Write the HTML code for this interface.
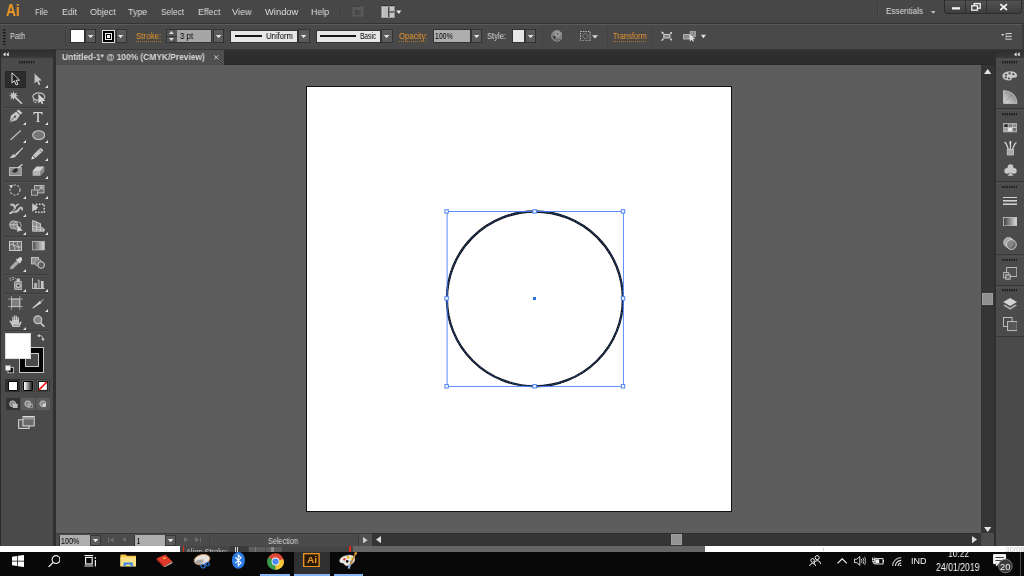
<!DOCTYPE html>
<html><head><meta charset="utf-8"><title>Untitled-1* @ 100% (CMYK/Preview)</title>
<style>
html,body{margin:0;padding:0;background:#474747;}
body{width:1024px;height:576px;position:relative;overflow:hidden;font-family:"Liberation Sans",sans-serif;}
#app{position:absolute;left:0;top:0;width:1024px;height:576px;overflow:hidden;background:#474747;}
#app div,#app svg,#app span.t{position:absolute;display:block;}
#app span.t{white-space:nowrap;transform-origin:0 0;will-change:transform;}
</style></head><body><div id="app">
<div style="left:0px;top:0px;width:1024px;height:23px;background:#474747;"></div>
<div style="left:0px;top:23px;width:1024px;height:1px;background:#333;"></div>
<div style="left:0px;top:24px;width:1022px;height:25px;background:#494949;border-top:1px solid #5a5a5a;box-sizing:border-box;"></div>
<div style="left:1022px;top:24px;width:2px;height:25px;background:#3a3a3a;"></div>
<div style="left:0px;top:49px;width:1024px;height:15.5px;background:linear-gradient(#383838 0,#2e2e2e 22%,#2d2d2d 90%,#272727 100%);"></div>
<div style="left:0px;top:49.5px;width:53px;height:8.5px;background:linear-gradient(#2e2e2e,#3a3a3a);"></div>
<div style="left:56px;top:49.5px;width:168px;height:15px;background:#4f4f4f;"></div>
<div style="left:996px;top:49.5px;width:28px;height:8.5px;background:linear-gradient(#2e2e2e,#3a3a3a);"></div>
<div style="left:56px;top:64.5px;width:925.5px;height:469px;background:#5d5d5d;"></div>
<div style="left:306px;top:86px;width:426px;height:426px;background:#111;"></div>
<div style="left:307px;top:87px;width:424px;height:424px;background:#fff;"></div>
<div style="left:0px;top:58px;width:53.3px;height:488px;background:#4a4a4a;"></div>
<div style="left:0px;top:49px;width:1px;height:497px;background:#2c2c2c;"></div>
<div style="left:53.2px;top:49px;width:2.6px;height:497px;background:#303030;"></div>
<div style="left:994px;top:49px;width:2px;height:497px;background:#2f2f2f;"></div>
<div style="left:996px;top:58px;width:28px;height:488px;background:#4a4a4a;"></div>
<div style="left:981.3px;top:64.5px;width:12.7px;height:469px;background:#353535;"></div>
<div style="left:982px;top:293px;width:11.2px;height:11.6px;background:#909090;border:1px solid #9c9c9c;box-sizing:border-box;"></div>
<div style="left:981.3px;top:533.3px;width:12.7px;height:12.5px;background:#4c4c4c;"></div>
<div style="left:56px;top:533.3px;width:316px;height:12.5px;background:#4b4b4b;border-top:1px solid #3a3a3a;box-sizing:border-box;"></div>
<div style="left:372px;top:533.3px;width:609.3px;height:12.5px;background:#353535;border-top:1px solid #2f2f2f;box-sizing:border-box;"></div>
<div style="left:670.9px;top:534.2px;width:11.2px;height:10.9px;background:#939393;border:1px solid #9e9e9e;box-sizing:border-box;"></div>
<div style="left:0px;top:545.8px;width:1024px;height:6.2px;background:#666;"></div>
<div style="left:0px;top:545.8px;width:180px;height:6.2px;background:#fff;"></div>
<div style="left:180px;top:545.8px;width:169px;height:6.2px;background:#454545;"></div>
<div style="left:182.8px;top:545.8px;width:1.7px;height:6.2px;background:#e0281e;"></div>
<div style="left:349.1px;top:545.8px;width:1.9px;height:6.2px;background:#e0281e;"></div>
<div style="left:351px;top:545.8px;width:2.4px;height:6.2px;background:#454545;"></div>
<div style="left:704.8px;top:545.8px;width:319.2px;height:6.2px;background:#fff;"></div>
<div style="left:0px;top:552px;width:1024px;height:24px;background:#080808;"></div>
<div style="left:294px;top:552px;width:36px;height:24px;background:#303030;"></div>
<svg style="left:0px;top:0px;" width="1024" height="576" viewBox="0 0 1024 576" preserveAspectRatio="none"><ellipse cx="534.9" cy="298.9" rx="88.0" ry="87.4" fill="none" stroke="#0c0c0c" stroke-width="2.3"/><ellipse cx="534.9" cy="298.9" rx="88.0" ry="87.4" fill="none" stroke="#2f6fe6" stroke-width="0.8" stroke-dasharray="2.2 1.1" opacity="0.9"/><rect x="447.1" y="211.5" width="176.29999999999995" height="174.89999999999998" fill="none" stroke="#4d80fb" stroke-width="0.9"/><rect x="444.90000000000003" y="209.70000000000002" width="3.4" height="3.4" fill="#fff" stroke="#4a80f5" stroke-width="1"/><rect x="444.90000000000003" y="296.7" width="3.4" height="3.4" fill="#fff" stroke="#4a80f5" stroke-width="1"/><rect x="444.90000000000003" y="384.6" width="3.4" height="3.4" fill="#fff" stroke="#4a80f5" stroke-width="1"/><rect x="532.9" y="209.70000000000002" width="3.4" height="3.4" fill="#fff" stroke="#4a80f5" stroke-width="1"/><rect x="532.9" y="384.6" width="3.4" height="3.4" fill="#fff" stroke="#4a80f5" stroke-width="1"/><rect x="621.3" y="209.70000000000002" width="3.4" height="3.4" fill="#fff" stroke="#4a80f5" stroke-width="1"/><rect x="621.3" y="296.7" width="3.4" height="3.4" fill="#fff" stroke="#4a80f5" stroke-width="1"/><rect x="621.3" y="384.6" width="3.4" height="3.4" fill="#fff" stroke="#4a80f5" stroke-width="1"/><rect x="533" y="297" width="3" height="3" fill="#2a72e0"/></svg>
<span class="t" style="left:6.30px;top:1.61px;font-size:17px;line-height:17px;color:#f29a24;font-weight:bold;transform:scaleX(0.8059);">Ai</span>
<span class="t" style="left:35.30px;top:7.14px;font-size:9.4px;line-height:9.4px;color:#dedede;transform:scaleX(0.8384);">File</span>
<span class="t" style="left:61.50px;top:7.14px;font-size:9.4px;line-height:9.4px;color:#dedede;transform:scaleX(0.9322);">Edit</span>
<span class="t" style="left:89.80px;top:7.14px;font-size:9.4px;line-height:9.4px;color:#dedede;transform:scaleX(0.9497);">Object</span>
<span class="t" style="left:128.20px;top:7.14px;font-size:9.4px;line-height:9.4px;color:#dedede;transform:scaleX(0.9470);">Type</span>
<span class="t" style="left:160.80px;top:7.14px;font-size:9.4px;line-height:9.4px;color:#dedede;transform:scaleX(0.8880);">Select</span>
<span class="t" style="left:197.60px;top:7.14px;font-size:9.4px;line-height:9.4px;color:#dedede;transform:scaleX(0.9387);">Effect</span>
<span class="t" style="left:231.80px;top:7.14px;font-size:9.4px;line-height:9.4px;color:#dedede;transform:scaleX(0.9651);">View</span>
<span class="t" style="left:264.60px;top:7.14px;font-size:9.4px;line-height:9.4px;color:#dedede;transform:scaleX(0.9930);">Window</span>
<span class="t" style="left:310.60px;top:7.14px;font-size:9.4px;line-height:9.4px;color:#dedede;transform:scaleX(0.9414);">Help</span>
<div style="left:339.6px;top:4px;width:1px;height:15px;background:#404040;"></div>
<div style="left:340.6px;top:4px;width:1px;height:15px;background:#4c4c4c;"></div>
<svg style="left:352px;top:6px;" width="12" height="11" viewBox="0 0 12 11" preserveAspectRatio="none"><rect x="0.5" y="0.5" width="11" height="10" fill="#575757" stroke="#515151"/><rect x="0.5" y="0" width="7" height="1" fill="#3f3f3f"/></svg>
<span class="t" style="left:355.00px;top:9.64px;font-size:6.8px;line-height:6.8px;color:#3c3c3c;font-weight:bold;transform:scaleX(0.7675);">Br</span>
<svg style="left:380.5px;top:4.6px;" width="21.5" height="13.4" viewBox="0 0 21.5 13.4" preserveAspectRatio="none"><rect x="0.6" y="0" width="13" height="1" fill="#1c1c1c"/><rect x="0.6" y="1.2" width="13" height="11.6" fill="#d2d2d2" stroke="#8a8a8a" stroke-width="0.8"/><rect x="1.8" y="2.4" width="5.2" height="9.2" fill="#bcbcbc"/><rect x="8.6" y="2.4" width="4.2" height="4" fill="#c4c4c4"/><rect x="8.6" y="7.6" width="4.2" height="4" fill="#c4c4c4"/><rect x="7.2" y="2" width="1.2" height="10" fill="#262626"/><rect x="8.4" y="6.4" width="4.8" height="1.1" fill="#262626"/><path d="M15.2 5.6 L20.4 5.6 L17.8 9 Z" fill="#e6e6e6"/></svg>
<div style="left:876.5px;top:4px;width:1px;height:15px;background:#3c3c3c;"></div>
<div style="left:877.5px;top:4px;width:1px;height:15px;background:#4e4e4e;"></div>
<span class="t" style="left:886.40px;top:6.24px;font-size:9.4px;line-height:9.4px;color:#dedede;transform:scaleX(0.8683);">Essentials</span>
<svg style="left:930.8px;top:10.8px;" width="4.6" height="2.8" viewBox="0 0 4.6 2.8" preserveAspectRatio="none"><path d="M0 0 L4.6 0 L2.3 2.8 Z" fill="#c0c0c0"/></svg>
<svg style="left:944px;top:0px;" width="78" height="14.5" viewBox="0 0 78 14.5" preserveAspectRatio="none"><defs><linearGradient id="wb" x1="0" y1="0" x2="0" y2="1"><stop offset="0" stop-color="#535353"/><stop offset="1" stop-color="#3d3d3d"/></linearGradient></defs><path d="M0.5 0 V11 Q0.5 13.5 3 13.5 H75 Q77.5 13.5 77.5 11 V0 Z" fill="url(#wb)" stroke="#2b2b2b"/><path d="M21.5 0 V13 M42.5 0 V13" stroke="#2e2e2e"/><rect x="8" y="7.2" width="8" height="2.3" fill="#f2f2f2"/><rect x="30.2" y="3.6" width="6" height="4.6" fill="none" stroke="#f2f2f2" stroke-width="1.3"/><rect x="27.8" y="5.8" width="5.6" height="4.4" fill="#454545" stroke="#f2f2f2" stroke-width="1.3"/><path d="M56.3 4.2 L63 10 M63 4.2 L56.3 10" stroke="#f2f2f2" stroke-width="1.7"/></svg>
<svg style="left:3.4px;top:29px;" width="3" height="16" viewBox="0 0 3 16" preserveAspectRatio="none"><rect x="0" y="0.2" width="2.6" height="1.3" fill="#1a1a1a"/><rect x="0" y="3.1" width="2.6" height="1.3" fill="#1a1a1a"/><rect x="0" y="6.0" width="2.6" height="1.3" fill="#1a1a1a"/><rect x="0" y="8.899999999999999" width="2.6" height="1.3" fill="#1a1a1a"/><rect x="0" y="11.799999999999999" width="2.6" height="1.3" fill="#1a1a1a"/><rect x="0" y="14.7" width="2.6" height="1.3" fill="#1a1a1a"/></svg>
<span class="t" style="left:9.80px;top:32.32px;font-size:8.6px;line-height:8.6px;color:#d8d8d8;transform:scaleX(0.8592);">Path</span>
<div style="left:64.5px;top:27px;width:1px;height:20px;background:#414141;"></div>
<div style="left:70.3px;top:29.3px;width:14.6px;height:14.2px;background:#fff;border:1px solid #2e2e2e;box-sizing:border-box;"></div>
<div style="left:84.6px;top:29.3px;width:11px;height:14.2px;background:#5b5b5b;border:1px solid #333;box-sizing:border-box;"></div>
<svg style="left:87.5px;top:35.0px;" width="5.2" height="3.2" viewBox="0 0 5.2 3.2" preserveAspectRatio="none"><path d="M0 0 L5.2 0 L2.6 3.2 Z" fill="#e4e4e4"/></svg>
<div style="left:101.6px;top:29.6px;width:13.6px;height:13.6px;background:#000;border:1px solid #ddd;box-sizing:border-box;"></div>
<div style="left:104.6px;top:32.6px;width:7.6px;height:7.6px;background:#000;border:1px solid #eee;box-sizing:border-box;"></div>
<div style="left:106.6px;top:34.6px;width:3.6px;height:3.6px;background:#f4f4f4;"></div>
<div style="left:115.5px;top:29.3px;width:11px;height:14.2px;background:#5b5b5b;border:1px solid #333;box-sizing:border-box;"></div>
<svg style="left:118.4px;top:35.0px;" width="5.2" height="3.2" viewBox="0 0 5.2 3.2" preserveAspectRatio="none"><path d="M0 0 L5.2 0 L2.6 3.2 Z" fill="#e4e4e4"/></svg>
<span class="t" style="left:135.80px;top:32.25px;font-size:8.8px;line-height:8.8px;color:#e8952a;transform:scaleX(0.9039);">Stroke:</span>
<div style="left:135.8px;top:40.5px;width:25.4px;height:1px;background:repeating-linear-gradient(90deg,#b87422 0 1px,transparent 1px 2px);"></div>
<div style="left:166px;top:29.3px;width:11.6px;height:14.2px;background:#555;border:1px solid #333;box-sizing:border-box;"></div>
<div style="left:167px;top:36px;width:9.6px;height:1px;background:#3a3a3a;"></div>
<svg style="left:169.4px;top:31.4px;" width="4.8" height="3" viewBox="0 0 4.8 3" preserveAspectRatio="none"><path d="M0 3 L4.8 3 L2.4 0 Z" fill="#dcdcdc"/></svg>
<svg style="left:169.4px;top:38.4px;" width="4.8" height="3" viewBox="0 0 4.8 3" preserveAspectRatio="none"><path d="M0 0 L4.8 0 L2.4 3 Z" fill="#dcdcdc"/></svg>
<div style="left:177.4px;top:29.3px;width:35px;height:14.2px;background:#a6a6a6;border:1px solid #333;border-left:none;box-sizing:border-box;"></div>
<span class="t" style="left:180.00px;top:31.75px;font-size:8.8px;line-height:8.8px;color:#000;transform:scaleX(0.8857);">3 pt</span>
<div style="left:212.6px;top:29.3px;width:11.2px;height:14.2px;background:#5b5b5b;border:1px solid #333;box-sizing:border-box;"></div>
<svg style="left:215.6px;top:35.0px;" width="5.2" height="3.2" viewBox="0 0 5.2 3.2" preserveAspectRatio="none"><path d="M0 0 L5.2 0 L2.6 3.2 Z" fill="#e4e4e4"/></svg>
<div style="left:229.6px;top:29.6px;width:68.2px;height:13.6px;background:#e6e6e6;border:1px solid #333;box-sizing:border-box;"></div>
<div style="left:234.6px;top:35.2px;width:27.6px;height:1.8px;background:#161616;"></div>
<span class="t" style="left:265.90px;top:31.75px;font-size:8.8px;line-height:8.8px;color:#000;transform:scaleX(0.8732);">Uniform</span>
<div style="left:297.6px;top:29.3px;width:12.2px;height:14.2px;background:#5b5b5b;border:1px solid #333;box-sizing:border-box;"></div>
<svg style="left:301.1px;top:35.0px;" width="5.2" height="3.2" viewBox="0 0 5.2 3.2" preserveAspectRatio="none"><path d="M0 0 L5.2 0 L2.6 3.2 Z" fill="#e4e4e4"/></svg>
<div style="left:315.6px;top:29.6px;width:65.2px;height:13.6px;background:#e6e6e6;border:1px solid #333;box-sizing:border-box;"></div>
<div style="left:320px;top:35.2px;width:36px;height:1.8px;background:#161616;"></div>
<span class="t" style="left:359.80px;top:31.75px;font-size:8.8px;line-height:8.8px;color:#000;transform:scaleX(0.7482);">Basic</span>
<div style="left:380.6px;top:29.3px;width:12.2px;height:14.2px;background:#5b5b5b;border:1px solid #333;box-sizing:border-box;"></div>
<svg style="left:384.1px;top:35.0px;" width="5.2" height="3.2" viewBox="0 0 5.2 3.2" preserveAspectRatio="none"><path d="M0 0 L5.2 0 L2.6 3.2 Z" fill="#e4e4e4"/></svg>
<span class="t" style="left:398.50px;top:32.25px;font-size:8.8px;line-height:8.8px;color:#e8952a;transform:scaleX(0.8830);">Opacity:</span>
<div style="left:398.5px;top:40.5px;width:28.6px;height:1px;background:repeating-linear-gradient(90deg,#b87422 0 1px,transparent 1px 2px);"></div>
<div style="left:432.5px;top:29.3px;width:38.8px;height:14.2px;background:#adadad;border:1px solid #333;box-sizing:border-box;"></div>
<span class="t" style="left:435.00px;top:31.75px;font-size:8.8px;line-height:8.8px;color:#000;transform:scaleX(0.7909);">100%</span>
<div style="left:471px;top:29.3px;width:11.4px;height:14.2px;background:#5b5b5b;border:1px solid #333;box-sizing:border-box;"></div>
<svg style="left:474.09999999999997px;top:35.0px;" width="5.2" height="3.2" viewBox="0 0 5.2 3.2" preserveAspectRatio="none"><path d="M0 0 L5.2 0 L2.6 3.2 Z" fill="#e4e4e4"/></svg>
<span class="t" style="left:486.90px;top:31.75px;font-size:8.8px;line-height:8.8px;color:#d8d8d8;transform:scaleX(0.8678);">Style:</span>
<div style="left:511.6px;top:29.3px;width:13.4px;height:14.2px;background:#e8e8e8;border:1px solid #333;box-sizing:border-box;"></div>
<div style="left:524.8px;top:29.3px;width:11.6px;height:14.2px;background:#5b5b5b;border:1px solid #333;box-sizing:border-box;"></div>
<svg style="left:527.9999999999999px;top:35.0px;" width="5.2" height="3.2" viewBox="0 0 5.2 3.2" preserveAspectRatio="none"><path d="M0 0 L5.2 0 L2.6 3.2 Z" fill="#e4e4e4"/></svg>
<div style="left:541.6px;top:27px;width:1px;height:20px;background:#414141;"></div>
<div style="left:606.6px;top:27px;width:1px;height:20px;background:#414141;"></div>
<div style="left:652.2px;top:27px;width:1px;height:20px;background:#414141;"></div>
<svg style="left:550.6px;top:29.8px;" width="11.8" height="11.8" viewBox="0 0 11.8 11.8" preserveAspectRatio="none"><defs><radialGradient id="gl" cx="0.55" cy="0.35" r="0.75"><stop offset="0" stop-color="#b4b4b4"/><stop offset="0.55" stop-color="#7c7c7c"/><stop offset="1" stop-color="#3e3e3e"/></radialGradient></defs><circle cx="5.9" cy="5.9" r="5.3" fill="url(#gl)" stroke="#a6a6a6" stroke-width="0.8"/><path d="M2.2 6.6 Q3.4 5.4 4.6 6.4 Q5 8 3.6 8.6 Q2.2 8.4 2.2 6.6 Z" fill="#1e1e1e" opacity="0.85"/><path d="M5.6 3.4 Q7 2.6 7.6 4 Q7 5.6 5.8 5 Z" fill="#444" opacity="0.8"/></svg>
<svg style="left:579.8px;top:30.6px;" width="18.4" height="10.6" viewBox="0 0 18.4 10.6" preserveAspectRatio="none"><rect x="0.5" y="0.5" width="9.6" height="9.4" fill="none" stroke="#d6d6d6" stroke-width="0.8" stroke-dasharray="1.5 1"/><circle cx="5.3" cy="5.2" r="2.5" fill="none" stroke="#b4b4b4" stroke-width="0.8" stroke-dasharray="1.2 0.9"/><path d="M12 4.2 L18 4.2 L15 7.4 Z" fill="#dadada"/></svg>
<span class="t" style="left:613.20px;top:32.25px;font-size:8.8px;line-height:8.8px;color:#e8952a;transform:scaleX(0.8499);">Transform</span>
<div style="left:613.2px;top:40.5px;width:34px;height:1px;background:repeating-linear-gradient(90deg,#b87422 0 1px,transparent 1px 2px);"></div>
<svg style="left:660.6px;top:31px;" width="11.8" height="10.4" viewBox="0 0 11.8 10.4" preserveAspectRatio="none"><rect x="2.8" y="3.4" width="6.2" height="3.6" fill="#858585" stroke="#d8d8d8" stroke-width="0.9"/><path d="M0.2 0.6 L3 1.4 L1.2 3.2 Z M11.6 0.6 L8.8 1.4 L10.6 3.2 Z M0.2 9.8 L3 9 L1.2 7.2 Z M11.6 9.8 L8.8 9 L10.6 7.2 Z" fill="#d8d8d8"/><path d="M0.6 0.8 L2.6 2.8 M11.2 0.8 L9.2 2.8 M0.6 9.6 L2.6 7.6 M11.2 9.6 L9.2 7.6" stroke="#cfcfcf" stroke-width="0.8"/></svg>
<svg style="left:683px;top:30.6px;" width="24" height="11" viewBox="0 0 24 11" preserveAspectRatio="none"><rect x="0.6" y="3.4" width="6" height="4.6" fill="#8a8a8a" stroke="#c4c4c4" stroke-width="0.8"/><rect x="7.2" y="0.5" width="5.4" height="5.2" fill="#8e8e8e" stroke="#b4b4b4" stroke-width="0.7"/><path d="M6.8 3.2 L6.8 10.6 L8.6 8.8 L10 10.8 L11 10.2 L9.8 8.2 L12.2 8 Z" fill="#dedede"/><path d="M17.8 3.8 L23 3.8 L20.4 7.2 Z" fill="#e4e4e4"/></svg>
<svg style="left:1000.5px;top:32.6px;" width="11" height="7" viewBox="0 0 11 7" preserveAspectRatio="none"><path d="M0 1 L3.4 1 L1.7 3.2 Z" fill="#cfcfcf"/><rect x="4.6" y="0" width="6.2" height="1.1" fill="#cfcfcf"/><rect x="4.6" y="2.8" width="6.2" height="1.1" fill="#cfcfcf"/><rect x="4.6" y="5.6" width="6.2" height="1.1" fill="#cfcfcf"/><rect x="4.6" y="0" width="1.2" height="6.7" fill="#9a9a9a"/></svg>
<span class="t" style="left:62.30px;top:52.61px;font-size:9.2px;line-height:9.2px;color:#d6d6d6;font-weight:bold;transform:scaleX(0.9118);">Untitled-1* @ 100% (CMYK/Preview)</span>
<svg style="left:214.4px;top:55.2px;" width="4.6" height="4.6" viewBox="0 0 4.6 4.6" preserveAspectRatio="none"><path d="M0.3 0.3 L4.3 4.3 M4.3 0.3 L0.3 4.3" stroke="#cfcfcf" stroke-width="1"/></svg>
<svg style="left:3.4px;top:51.6px;" width="6" height="4.8" viewBox="0 0 6 4.8" preserveAspectRatio="none"><path d="M2.6 0 V4.8 L0 2.4 Z M5.8 0 V4.8 L3.2 2.4 Z" fill="#dadada"/></svg>
<svg style="left:1014.4px;top:51.6px;" width="6" height="4.8" viewBox="0 0 6 4.8" preserveAspectRatio="none"><path d="M2.6 0 V4.8 L0 2.4 Z M5.8 0 V4.8 L3.2 2.4 Z" fill="#dadada"/></svg>
<svg style="left:19.2px;top:61.2px;" width="15.6" height="2.4" viewBox="0 0 15.6 2.4" preserveAspectRatio="none"><rect x="0.0" y="0" width="1.4" height="2.4" fill="#1e1e1e"/><rect x="2.32" y="0" width="1.4" height="2.4" fill="#1e1e1e"/><rect x="4.64" y="0" width="1.4" height="2.4" fill="#1e1e1e"/><rect x="6.959999999999999" y="0" width="1.4" height="2.4" fill="#1e1e1e"/><rect x="9.28" y="0" width="1.4" height="2.4" fill="#1e1e1e"/><rect x="11.6" y="0" width="1.4" height="2.4" fill="#1e1e1e"/><rect x="13.919999999999998" y="0" width="1.4" height="2.4" fill="#1e1e1e"/></svg>
<div style="left:4px;top:106.6px;width:45px;height:1px;background:#3d3d3d;"></div>
<div style="left:4px;top:107.6px;width:45px;height:0.6px;background:#525252;"></div>
<div style="left:4px;top:180.8px;width:45px;height:1px;background:#3d3d3d;"></div>
<div style="left:4px;top:181.8px;width:45px;height:0.6px;background:#525252;"></div>
<div style="left:4px;top:236px;width:45px;height:1px;background:#3d3d3d;"></div>
<div style="left:4px;top:237px;width:45px;height:0.6px;background:#525252;"></div>
<div style="left:4px;top:273.6px;width:45px;height:1px;background:#3d3d3d;"></div>
<div style="left:4px;top:274.6px;width:45px;height:0.6px;background:#525252;"></div>
<div style="left:4px;top:292.8px;width:45px;height:1px;background:#3d3d3d;"></div>
<div style="left:4px;top:293.8px;width:45px;height:0.6px;background:#525252;"></div>
<div style="left:4px;top:330.2px;width:45px;height:1px;background:#3d3d3d;"></div>
<div style="left:4px;top:331.2px;width:45px;height:0.6px;background:#525252;"></div>
<div style="left:5.2px;top:71.4px;width:20.8px;height:16.4px;background:#2d2d2d;border:1px solid #252525;box-sizing:border-box;border-radius:1px;"></div>
<svg style="left:11.4px;top:72px;" width="9.8" height="14.2" viewBox="0 0 9.8 14.2" preserveAspectRatio="none"><path d="M1 0.8 V11 L3.4 8.8 L5.2 13 L6.9 12.2 L5.1 8.2 L8.6 8.2 Z" fill="#1a1a1a" stroke="#e2e2e2" stroke-width="1"/></svg>
<svg style="left:34.4px;top:72.8px;" width="8.5" height="12.8" viewBox="0 0 8.5 12.8" preserveAspectRatio="none"><path d="M0.6 0.4 V10.4 L3 8.2 L4.8 12.2 L6.4 11.4 L4.6 7.6 L7.8 7.4 Z" fill="#c4c4c4"/></svg>
<svg style="left:45.4px;top:84.89999999999999px;" width="3" height="3" viewBox="0 0 3 3" preserveAspectRatio="none"><path d="M3 0 V3 H0 Z" fill="#e2e2e2"/></svg>
<svg style="left:8.6px;top:90.6px;" width="14" height="13.6" viewBox="0 0 14 13.6" preserveAspectRatio="none"><path d="M4.6 0 L5.4 2.8 L8 1.4 L6.8 4 L9.6 4.8 L6.8 5.6 L8 8.4 L5.4 6.8 L4.6 9.6 L3.8 6.8 L1.2 8.4 L2.4 5.6 L0 4.8 L2.4 4 L1.2 1.4 L3.8 2.8 Z" fill="#c8c8c8"/><path d="M6.4 6.4 L13 12.8" stroke="#c8c8c8" stroke-width="1.6"/></svg>
<svg style="left:31.6px;top:91.6px;" width="14" height="12.4" viewBox="0 0 14 12.4" preserveAspectRatio="none"><ellipse cx="6.8" cy="4.6" rx="6" ry="3.8" fill="none" stroke="#c2c2c2" stroke-width="1.2"/><path d="M2 6.6 Q0.6 9.4 3 10.6 Q4.6 11 4.6 9.4" fill="none" stroke="#c2c2c2" stroke-width="1"/><path d="M6.4 1.8 V11.6 L8.6 9.6 L10 12.4 L11.4 11.8 L10.2 9.2 L13.2 8.8 Z" fill="#d2d2d2"/></svg>
<svg style="left:9.2px;top:109.4px;" width="14" height="13.6" viewBox="0 0 14 13.6" preserveAspectRatio="none"><path d="M9.4 0.4 L13.4 4 L11.6 5.6 L7.8 2 Z" fill="#d2d2d2"/><path d="M7.2 2.6 L11 6.2 L7.4 11.2 L0.6 13.2 L2 6.6 Z" fill="#c6c6c6"/><path d="M0.8 13 L5.6 8" stroke="#4a4a4a" stroke-width="0.9"/><circle cx="6" cy="7.6" r="1.1" fill="#4a4a4a"/></svg>
<svg style="left:22.6px;top:121.89999999999999px;" width="3" height="3" viewBox="0 0 3 3" preserveAspectRatio="none"><path d="M3 0 V3 H0 Z" fill="#e2e2e2"/></svg>
<svg style="left:33.2px;top:111.6px;" width="10" height="10.6" viewBox="0 0 10 10.6" preserveAspectRatio="none"><path d="M0.4 0 H9.6 V2.6 H8.8 Q8.6 1 7 1 H5.8 V9 Q5.8 9.8 7.2 9.8 V10.4 H2.8 V9.8 Q4.2 9.8 4.2 9 V1 H3 Q1.4 1 1.2 2.6 H0.4 Z" fill="#d4d4d4"/></svg>
<svg style="left:45.4px;top:121.89999999999999px;" width="3" height="3" viewBox="0 0 3 3" preserveAspectRatio="none"><path d="M3 0 V3 H0 Z" fill="#e2e2e2"/></svg>
<svg style="left:9.6px;top:129.6px;" width="11.4" height="10.6" viewBox="0 0 11.4 10.6" preserveAspectRatio="none"><path d="M0.5 10 L10.8 0.5" stroke="#cacaca" stroke-width="1.1"/></svg>
<svg style="left:22.6px;top:139.9px;" width="3" height="3" viewBox="0 0 3 3" preserveAspectRatio="none"><path d="M3 0 V3 H0 Z" fill="#e2e2e2"/></svg>
<svg style="left:31.6px;top:130px;" width="13.4" height="10.2" viewBox="0 0 13.4 10.2" preserveAspectRatio="none"><ellipse cx="6.7" cy="5.1" rx="6" ry="4.4" fill="#767676" stroke="#c8c8c8" stroke-width="1.1"/></svg>
<svg style="left:45.4px;top:139.9px;" width="3" height="3" viewBox="0 0 3 3" preserveAspectRatio="none"><path d="M3 0 V3 H0 Z" fill="#e2e2e2"/></svg>
<svg style="left:8.8px;top:146.8px;" width="14.4" height="11.6" viewBox="0 0 14.4 11.6" preserveAspectRatio="none"><path d="M13.6 0.4 L14.2 1 L7.6 8.4 L6.2 7.2 Z" fill="#cecece"/><path d="M5.8 7.4 L7.4 8.8 Q6.4 11.4 0.2 11 Q2.2 10 2.6 8.8 Q3.6 6.8 5.8 7.4 Z" fill="#c6c6c6"/></svg>
<svg style="left:31.4px;top:147.8px;" width="12.6" height="11.8" viewBox="0 0 12.6 11.8" preserveAspectRatio="none"><path d="M8.6 0.6 Q10 -0.4 11.4 1 Q12.6 2.4 11.6 3.6 L4.4 10 L1.8 7.2 Z" fill="#c4c4c4"/><path d="M1.4 7.8 L3.8 10.4 L0.2 11.6 Z" fill="#e2e2e2"/><path d="M8.2 1.4 L11 4.2" stroke="#6a6a6a" stroke-width="0.8"/></svg>
<svg style="left:45.4px;top:158.10000000000002px;" width="3" height="3" viewBox="0 0 3 3" preserveAspectRatio="none"><path d="M3 0 V3 H0 Z" fill="#e2e2e2"/></svg>
<svg style="left:9.2px;top:164.2px;" width="14" height="12" viewBox="0 0 14 12" preserveAspectRatio="none"><rect x="0.6" y="3.6" width="11.6" height="8" fill="#8c8c8c" stroke="#c4c4c4" stroke-width="0.9"/><path d="M3.2 7.6 Q5 4 8.6 4.4 Q9.4 7.4 6.2 8.6 Q4.4 9 3.2 7.6 Z" fill="#2c2c2c"/><path d="M8.6 4 L13.4 0.4" stroke="#d6d6d6" stroke-width="1.2"/></svg>
<svg style="left:32.4px;top:165.6px;" width="12.8" height="10.2" viewBox="0 0 12.8 10.2" preserveAspectRatio="none"><path d="M4.4 0.6 H12.4 L8.6 5 H0.6 Z" fill="#d0d0d0"/><path d="M0.6 5 H8.6 V9.8 H0.6 Z" fill="#b4b4b4"/><path d="M8.6 5 L12.4 0.6 V5.6 L8.6 9.8 Z" fill="#8e8e8e"/></svg>
<svg style="left:45.4px;top:175.9px;" width="3" height="3" viewBox="0 0 3 3" preserveAspectRatio="none"><path d="M3 0 V3 H0 Z" fill="#e2e2e2"/></svg>
<svg style="left:9.4px;top:184.4px;" width="12" height="12" viewBox="0 0 12 12" preserveAspectRatio="none"><circle cx="6" cy="6" r="5" fill="none" stroke="#c4c4c4" stroke-width="1.1" stroke-dasharray="2.2 1.4"/><path d="M0 1.4 L3.8 0.8 L2.6 4.2 Z" fill="#d0d0d0"/></svg>
<svg style="left:22.6px;top:195.9px;" width="3" height="3" viewBox="0 0 3 3" preserveAspectRatio="none"><path d="M3 0 V3 H0 Z" fill="#e2e2e2"/></svg>
<svg style="left:31px;top:184.8px;" width="13.6" height="10.8" viewBox="0 0 13.6 10.8" preserveAspectRatio="none"><rect x="3.6" y="0.5" width="9.4" height="7.4" fill="#6c6c6c" stroke="#c4c4c4" stroke-width="0.9"/><rect x="0.5" y="5" width="6" height="5.2" fill="#5a5a5a" stroke="#b8b8b8" stroke-width="0.9"/><path d="M7.6 5.6 L11.2 2 M8.6 2 H11.2 V4.6" stroke="#dcdcdc" stroke-width="0.9" fill="none"/></svg>
<svg style="left:45.4px;top:195.9px;" width="3" height="3" viewBox="0 0 3 3" preserveAspectRatio="none"><path d="M3 0 V3 H0 Z" fill="#e2e2e2"/></svg>
<svg style="left:8.8px;top:202.6px;" width="14.4" height="11.2" viewBox="0 0 14.4 11.2" preserveAspectRatio="none"><path d="M1 10.4 Q5.2 8.6 6 4.4 Q5 1 2.2 1.8" fill="none" stroke="#c2c2c2" stroke-width="2.1" stroke-linecap="round"/><path d="M4.6 8.6 Q8.4 9.6 10.2 5.8 Q12.2 3 13.6 6.6" fill="none" stroke="#bcbcbc" stroke-width="2.1" stroke-linecap="round"/><path d="M6.2 4.2 Q7.6 1.6 9.4 1.2" fill="none" stroke="#c2c2c2" stroke-width="1.5" stroke-linecap="round"/><circle cx="4.9" cy="6.9" r="1.1" fill="#f2f2f2" stroke="#2a2a2a" stroke-width="0.7"/></svg>
<svg style="left:22.6px;top:213.9px;" width="3" height="3" viewBox="0 0 3 3" preserveAspectRatio="none"><path d="M3 0 V3 H0 Z" fill="#e2e2e2"/></svg>
<svg style="left:31.8px;top:203px;" width="13" height="10.2" viewBox="0 0 13 10.2" preserveAspectRatio="none"><rect x="3.8" y="1.2" width="8.4" height="8" fill="none" stroke="#d0d0d0" stroke-width="1.5" stroke-dasharray="1.7 1.3"/><path d="M0.2 0.2 V8.8 L6.4 4.6 Z" fill="#c8c8c8"/></svg>
<svg style="left:8.8px;top:219.8px;" width="14.4" height="12.6" viewBox="0 0 14.4 12.6" preserveAspectRatio="none"><circle cx="4.6" cy="4.8" r="4" fill="#7e7e7e" stroke="#c4c4c4" stroke-width="0.9"/><circle cx="8.2" cy="5.6" r="4" fill="none" stroke="#b4b4b4" stroke-width="0.9"/><path d="M1 4.8 H8" stroke="#d8d8d8" stroke-width="0.8"/><path d="M8.4 5 V12.4 L10.2 10.8 L13.6 10.8 Z" fill="#d8d8d8"/></svg>
<svg style="left:22.6px;top:231.9px;" width="3" height="3" viewBox="0 0 3 3" preserveAspectRatio="none"><path d="M3 0 V3 H0 Z" fill="#e2e2e2"/></svg>
<svg style="left:31.8px;top:220.2px;" width="12.8" height="12" viewBox="0 0 12.8 12" preserveAspectRatio="none"><path d="M0.6 0.6 L0.6 11.2 L12.2 11.2 L12.2 9 L8.4 6.6 L8.4 3.6 L4.6 2.2 L4.6 1.8 Z" fill="#8a8a8a" stroke="#cfcfcf" stroke-width="0.9"/><path d="M4.6 1.8 V11 M8.4 3.6 V11 M0.6 6 L8.4 7.6 M0.6 8.8 L12 10" stroke="#d8d8d8" stroke-width="0.7" fill="none"/></svg>
<svg style="left:45.4px;top:231.9px;" width="3" height="3" viewBox="0 0 3 3" preserveAspectRatio="none"><path d="M3 0 V3 H0 Z" fill="#e2e2e2"/></svg>
<svg style="left:9.2px;top:240.8px;" width="13" height="10" viewBox="0 0 13 10" preserveAspectRatio="none"><rect x="0.5" y="0.5" width="12" height="9" fill="#6e6e6e" stroke="#d0d0d0" stroke-width="0.9"/><path d="M0.5 4 Q4 2.4 6.4 5 Q9 7.4 12.5 5.6 M4.6 0.5 Q3 4 5.4 6 Q6.6 7.6 5.6 9.5 M8.8 0.5 Q7.4 3 9.4 5 Q10.6 7 9.4 9.5" fill="none" stroke="#dcdcdc" stroke-width="0.7"/></svg>
<svg style="left:31.8px;top:241.2px;" width="12.8" height="9.4" viewBox="0 0 12.8 9.4" preserveAspectRatio="none"><defs><linearGradient id="tg" x1="0" x2="1"><stop offset="0" stop-color="#505050"/><stop offset="1" stop-color="#d8d8d8"/></linearGradient></defs><rect x="0.5" y="0.5" width="11.8" height="8.4" fill="url(#tg)" stroke="#bcbcbc" stroke-width="0.8"/></svg>
<svg style="left:9.8px;top:257.4px;" width="12.6" height="12.2" viewBox="0 0 12.6 12.2" preserveAspectRatio="none"><path d="M9.2 0.4 Q10.6 -0.4 11.8 0.8 Q13 2 12 3.4 L10.4 5 L11 5.6 L10 6.6 L6 2.6 L7 1.6 L7.6 2.2 Z" fill="#d6d6d6"/><path d="M6.8 3.8 L8.8 5.8 L3 11.4 L0.4 12 L1 9.4 Z" fill="#aaaaaa" stroke="#c8c8c8" stroke-width="0.5"/></svg>
<svg style="left:22.6px;top:268.7px;" width="3" height="3" viewBox="0 0 3 3" preserveAspectRatio="none"><path d="M3 0 V3 H0 Z" fill="#e2e2e2"/></svg>
<svg style="left:31px;top:257.4px;" width="14.2" height="11.8" viewBox="0 0 14.2 11.8" preserveAspectRatio="none"><rect x="0.5" y="0.5" width="7" height="6.4" fill="#8e8e8e" stroke="#c8c8c8" stroke-width="0.9"/><circle cx="7.2" cy="5.6" r="3.4" fill="#7a7a7a" stroke="#b4b4b4" stroke-width="0.8"/><circle cx="10.2" cy="8" r="3.3" fill="#5a5a5a" stroke="#d2d2d2" stroke-width="1"/></svg>
<svg style="left:8.8px;top:276.8px;" width="13.6" height="13.4" viewBox="0 0 13.6 13.4" preserveAspectRatio="none"><rect x="5.6" y="4.4" width="7.4" height="8.4" rx="1" fill="#8a8a8a" stroke="#cacaca" stroke-width="0.9"/><rect x="7.6" y="1.6" width="3.4" height="2.8" fill="#c4c4c4"/><circle cx="9.3" cy="8.6" r="2" fill="#5a5a5a" stroke="#e0e0e0" stroke-width="0.9"/><path d="M0.4 1.4 H2 M3 0.6 H4.6 M0.8 3.2 H2.4 M3.4 2.4 H5 M5.6 1.2 H6.6" stroke="#c0c0c0" stroke-width="0.9"/></svg>
<svg style="left:22.6px;top:288.90000000000003px;" width="3" height="3" viewBox="0 0 3 3" preserveAspectRatio="none"><path d="M3 0 V3 H0 Z" fill="#e2e2e2"/></svg>
<svg style="left:31.8px;top:278.2px;" width="12.8" height="11" viewBox="0 0 12.8 11" preserveAspectRatio="none"><path d="M0.5 0 V10.5 H12.6" fill="none" stroke="#d0d0d0" stroke-width="0.9"/><rect x="2.2" y="5" width="2.6" height="5" fill="#b8b8b8"/><rect x="5.6" y="1.6" width="2.6" height="8.4" fill="#8a8a8a"/><rect x="9" y="3" width="2.6" height="7" fill="#c8c8c8"/></svg>
<svg style="left:45.4px;top:288.90000000000003px;" width="3" height="3" viewBox="0 0 3 3" preserveAspectRatio="none"><path d="M3 0 V3 H0 Z" fill="#e2e2e2"/></svg>
<svg style="left:7.8px;top:296.2px;" width="15.4" height="13.8" viewBox="0 0 15.4 13.8" preserveAspectRatio="none"><rect x="3.6" y="3" width="8.2" height="7.6" fill="#7e7e7e" stroke="#c4c4c4" stroke-width="0.9"/><path d="M3.6 0 V13.8 M11.8 0 V13.8 M0 3 H15.4 M0 10.6 H15.4" stroke="#c0c0c0" stroke-width="0.7"/></svg>
<svg style="left:32.4px;top:297.8px;" width="13.6" height="10.8" viewBox="0 0 13.6 10.8" preserveAspectRatio="none"><path d="M13 0.2 L8.6 5.6 L6 4 Z" fill="#8e8e8e"/><path d="M7.8 3.2 L9.4 5 L1 10.4 L0.2 10 Z" fill="#d8d8d8"/></svg>
<svg style="left:45.4px;top:308.90000000000003px;" width="3" height="3" viewBox="0 0 3 3" preserveAspectRatio="none"><path d="M3 0 V3 H0 Z" fill="#e2e2e2"/></svg>
<svg style="left:9px;top:314.8px;" width="13.4" height="12.4" viewBox="0 0 13.4 12.4" preserveAspectRatio="none"><path d="M3.8 12.2 L1.6 8 Q0 6 0.8 5.6 Q1.8 5.2 3.2 7 V5 H10 V8.4 Q10.6 6.8 11.8 6.4 Q13 6.4 12.6 7.2 L10.4 12.2 Z" fill="#c6c6c6"/><path d="M3.9 5.4 V2.2 M5.7 5.4 V0.9 M7.5 5.4 V1.3 M9.3 5.4 V2.8" stroke="#cacaca" stroke-width="1.3" stroke-linecap="round"/><path d="M4.2 10.2 H10" stroke="#7a7a7a" stroke-width="0.9"/></svg>
<svg style="left:22.6px;top:326.90000000000003px;" width="3" height="3" viewBox="0 0 3 3" preserveAspectRatio="none"><path d="M3 0 V3 H0 Z" fill="#e2e2e2"/></svg>
<svg style="left:32.8px;top:315px;" width="12.2" height="12.4" viewBox="0 0 12.2 12.4" preserveAspectRatio="none"><circle cx="4.8" cy="4.8" r="3.9" fill="#858585" stroke="#c8c8c8" stroke-width="1.2"/><path d="M7.6 7.8 L11.4 11.8" stroke="#c8c8c8" stroke-width="1.8"/></svg>
<div style="left:19.2px;top:346.9px;width:25px;height:26.1px;background:#050505;border:1px solid #c8c8c8;box-sizing:border-box;"></div>
<div style="left:25px;top:353px;width:13.6px;height:13.8px;background:#4a4a4a;border:1px solid #c8c8c8;box-sizing:border-box;"></div>
<div style="left:4.6px;top:333.3px;width:26.7px;height:26.1px;background:#ffffff;border:1px solid #dcdcdc;box-sizing:border-box;"></div>
<svg style="left:37px;top:334.2px;" width="8" height="7.4" viewBox="0 0 8 7.4" preserveAspectRatio="none"><path d="M1.6 1.6 Q5.6 1 6 5.2" fill="none" stroke="#c8c8c8" stroke-width="1"/><path d="M0 1.8 L2.8 0 L2.8 3.6 Z M6 7.2 L4.2 4.6 L7.8 4.6 Z" fill="#c8c8c8"/></svg>
<svg style="left:5px;top:365.4px;" width="9" height="8.4" viewBox="0 0 9 8.4" preserveAspectRatio="none"><rect x="3" y="2.6" width="5.4" height="5.2" fill="#111" stroke="#cfcfcf" stroke-width="0.8"/><rect x="0.5" y="0.5" width="5" height="4.8" fill="#f0f0f0" stroke="#9a9a9a" stroke-width="0.6"/></svg>
<div style="left:5.4px;top:379.2px;width:15px;height:13.2px;background:#2f2f2f;"></div>
<div style="left:20.8px;top:379.2px;width:14.6px;height:13.2px;background:#575757;border:1px solid #3c3c3c;box-sizing:border-box;"></div>
<div style="left:35.8px;top:379.2px;width:14.6px;height:13.2px;background:#575757;border:1px solid #3c3c3c;box-sizing:border-box;"></div>
<div style="left:8px;top:381px;width:9.8px;height:9.8px;background:#fff;border:0.9px solid #050505;box-sizing:border-box;border-radius:1px;"></div>
<div style="left:23.4px;top:381px;width:9.8px;height:9.8px;background:linear-gradient(90deg,#f4f4f4 10%,#2a2a2a 95%);border:0.9px solid #050505;box-sizing:border-box;border-radius:1px;"></div>
<svg style="left:38.4px;top:381px;" width="9.8" height="9.8" viewBox="0 0 9.8 9.8" preserveAspectRatio="none"><rect x="0.45" y="0.45" width="8.9" height="8.9" fill="#fff" stroke="#0a0a0a" stroke-width="0.9"/><path d="M1 8.8 L8.8 1" stroke="#f01414" stroke-width="1.7"/></svg>
<div style="left:5.8px;top:398px;width:14.6px;height:11.6px;background:#333;"></div>
<div style="left:20.8px;top:398px;width:14.6px;height:11.6px;background:#5c5c5c;"></div>
<div style="left:35.8px;top:398px;width:14.6px;height:11.6px;background:#5c5c5c;"></div>
<svg style="left:9px;top:399.8px;" width="9" height="8.4" viewBox="0 0 9 8.4" preserveAspectRatio="none"><circle cx="3.6" cy="3.8" r="3" fill="#8a8a8a" stroke="#c0c0c0" stroke-width="0.8"/><rect x="4.2" y="4" width="4" height="3.8" fill="#bdbdbd" stroke="#d8d8d8" stroke-width="0.5"/></svg>
<svg style="left:24px;top:399.8px;" width="9" height="8.4" viewBox="0 0 9 8.4" preserveAspectRatio="none"><circle cx="3.8" cy="3.8" r="3" fill="#8e8e8e" stroke="#c6c6c6" stroke-width="0.8"/><rect x="4.4" y="4.2" width="3.8" height="3.6" fill="none" stroke="#bcbcbc" stroke-width="0.7"/></svg>
<svg style="left:39px;top:399.8px;" width="9" height="8.4" viewBox="0 0 9 8.4" preserveAspectRatio="none"><circle cx="3.8" cy="3.8" r="3" fill="#8e8e8e" stroke="#c6c6c6" stroke-width="0.8"/><rect x="3.8" y="3.8" width="3" height="3" fill="#d8d8d8"/></svg>
<svg style="left:17.6px;top:416px;" width="17" height="13" viewBox="0 0 17 13" preserveAspectRatio="none"><rect x="0.6" y="3.8" width="10.6" height="8.6" fill="#5c5c5c" stroke="#d6d6d6" stroke-width="1"/><rect x="5" y="0.5" width="11.2" height="9.4" fill="#6a6a6a" stroke="#dcdcdc" stroke-width="1"/><rect x="5.6" y="1" width="10" height="2.4" fill="#9a9a9a"/></svg>
<div style="left:996px;top:58.6px;width:28px;height:50.4px;background:#4b4b4b;border-top:1px solid #515151;border-bottom:1px solid #383838;box-sizing:border-box;"></div>
<div style="left:996px;top:110.4px;width:28px;height:71.6px;background:#4b4b4b;border-top:1px solid #515151;border-bottom:1px solid #383838;box-sizing:border-box;"></div>
<div style="left:996px;top:183.2px;width:28px;height:71.80000000000001px;background:#4b4b4b;border-top:1px solid #515151;border-bottom:1px solid #383838;box-sizing:border-box;"></div>
<div style="left:996px;top:256.4px;width:28px;height:29.200000000000045px;background:#4b4b4b;border-top:1px solid #515151;border-bottom:1px solid #383838;box-sizing:border-box;"></div>
<div style="left:996px;top:287px;width:28px;height:49.60000000000002px;background:#4b4b4b;border-top:1px solid #515151;border-bottom:1px solid #383838;box-sizing:border-box;"></div>
<svg style="left:1001.8px;top:61.2px;" width="15.6" height="2.4" viewBox="0 0 15.6 2.4" preserveAspectRatio="none"><rect x="0.0" y="0" width="1.4" height="2.4" fill="#1e1e1e"/><rect x="2.32" y="0" width="1.4" height="2.4" fill="#1e1e1e"/><rect x="4.64" y="0" width="1.4" height="2.4" fill="#1e1e1e"/><rect x="6.959999999999999" y="0" width="1.4" height="2.4" fill="#1e1e1e"/><rect x="9.28" y="0" width="1.4" height="2.4" fill="#1e1e1e"/><rect x="11.6" y="0" width="1.4" height="2.4" fill="#1e1e1e"/><rect x="13.919999999999998" y="0" width="1.4" height="2.4" fill="#1e1e1e"/></svg>
<svg style="left:1001.8px;top:113.19999999999999px;" width="15.6" height="2.4" viewBox="0 0 15.6 2.4" preserveAspectRatio="none"><rect x="0.0" y="0" width="1.4" height="2.4" fill="#1e1e1e"/><rect x="2.32" y="0" width="1.4" height="2.4" fill="#1e1e1e"/><rect x="4.64" y="0" width="1.4" height="2.4" fill="#1e1e1e"/><rect x="6.959999999999999" y="0" width="1.4" height="2.4" fill="#1e1e1e"/><rect x="9.28" y="0" width="1.4" height="2.4" fill="#1e1e1e"/><rect x="11.6" y="0" width="1.4" height="2.4" fill="#1e1e1e"/><rect x="13.919999999999998" y="0" width="1.4" height="2.4" fill="#1e1e1e"/></svg>
<svg style="left:1001.8px;top:185.6px;" width="15.6" height="2.4" viewBox="0 0 15.6 2.4" preserveAspectRatio="none"><rect x="0.0" y="0" width="1.4" height="2.4" fill="#1e1e1e"/><rect x="2.32" y="0" width="1.4" height="2.4" fill="#1e1e1e"/><rect x="4.64" y="0" width="1.4" height="2.4" fill="#1e1e1e"/><rect x="6.959999999999999" y="0" width="1.4" height="2.4" fill="#1e1e1e"/><rect x="9.28" y="0" width="1.4" height="2.4" fill="#1e1e1e"/><rect x="11.6" y="0" width="1.4" height="2.4" fill="#1e1e1e"/><rect x="13.919999999999998" y="0" width="1.4" height="2.4" fill="#1e1e1e"/></svg>
<svg style="left:1001.8px;top:259.0px;" width="15.6" height="2.4" viewBox="0 0 15.6 2.4" preserveAspectRatio="none"><rect x="0.0" y="0" width="1.4" height="2.4" fill="#1e1e1e"/><rect x="2.32" y="0" width="1.4" height="2.4" fill="#1e1e1e"/><rect x="4.64" y="0" width="1.4" height="2.4" fill="#1e1e1e"/><rect x="6.959999999999999" y="0" width="1.4" height="2.4" fill="#1e1e1e"/><rect x="9.28" y="0" width="1.4" height="2.4" fill="#1e1e1e"/><rect x="11.6" y="0" width="1.4" height="2.4" fill="#1e1e1e"/><rect x="13.919999999999998" y="0" width="1.4" height="2.4" fill="#1e1e1e"/></svg>
<svg style="left:1001.8px;top:289.20000000000005px;" width="15.6" height="2.4" viewBox="0 0 15.6 2.4" preserveAspectRatio="none"><rect x="0.0" y="0" width="1.4" height="2.4" fill="#1e1e1e"/><rect x="2.32" y="0" width="1.4" height="2.4" fill="#1e1e1e"/><rect x="4.64" y="0" width="1.4" height="2.4" fill="#1e1e1e"/><rect x="6.959999999999999" y="0" width="1.4" height="2.4" fill="#1e1e1e"/><rect x="9.28" y="0" width="1.4" height="2.4" fill="#1e1e1e"/><rect x="11.6" y="0" width="1.4" height="2.4" fill="#1e1e1e"/><rect x="13.919999999999998" y="0" width="1.4" height="2.4" fill="#1e1e1e"/></svg>
<svg style="left:1002.4px;top:70.8px;" width="15.6" height="9.8" viewBox="0 0 15.6 11.6" preserveAspectRatio="none"><path d="M7.6 0.4 Q14.8 0.4 15.2 5.4 Q15 8.6 11.4 8 Q9.6 7.8 9.6 9.2 Q9.8 11.2 6.8 11.2 Q0.6 10.8 0.4 6 Q0.6 1 7.6 0.4 Z" fill="#c8c8c8"/><circle cx="4" cy="4.4" r="1.2" fill="#4b4b4b"/><circle cx="7.6" cy="2.8" r="1.2" fill="#4b4b4b"/><circle cx="11.4" cy="3.8" r="1.2" fill="#4b4b4b"/><circle cx="3.8" cy="7.8" r="1.2" fill="#4b4b4b"/><circle cx="7" cy="8.8" r="1.1" fill="#4b4b4b"/></svg>
<svg style="left:1003px;top:90.4px;" width="14.6" height="13.8" viewBox="0 0 14.6 13.8" preserveAspectRatio="none"><defs><linearGradient id="cg" x1="0" y1="1" x2="1" y2="0"><stop offset="0" stop-color="#e0e0e0"/><stop offset="1" stop-color="#6a6a6a"/></linearGradient></defs><path d="M0.5 0.5 Q13.6 1.4 14 13.4 H0.5 Z" fill="url(#cg)" stroke="#c8c8c8" stroke-width="0.8"/><path d="M0.5 13.4 L9 4.4" stroke="#888" stroke-width="0.6"/></svg>
<svg style="left:1003px;top:123.4px;" width="14.4" height="9.4" viewBox="0 0 14.4 9.4" preserveAspectRatio="none"><rect x="0.5" y="0.5" width="13.4" height="8.4" fill="#d0d0d0" stroke="#b0b0b0" stroke-width="0.8"/><rect x="1.2" y="1.2" width="3.6" height="3" fill="#2a2a2a"/><rect x="5.4" y="1.2" width="3.6" height="3" fill="#7a7a7a"/><rect x="9.6" y="1.2" width="3.6" height="3" fill="#8a8a8a"/><rect x="1.2" y="5" width="3.6" height="3.2" fill="#a0a0a0"/><rect x="5.4" y="5" width="3.6" height="3.2" fill="#e8e8e8"/><rect x="9.6" y="5" width="3.6" height="3.2" fill="#707070"/></svg>
<svg style="left:1003.6px;top:141.4px;" width="13" height="14.4" viewBox="0 0 13 14.4" preserveAspectRatio="none"><rect x="3.2" y="8.4" width="6.4" height="5.6" fill="#a8a8a8" stroke="#d0d0d0" stroke-width="0.7"/><path d="M4.4 8.4 L2.4 3.2 L0.6 1 M6.4 8.4 V3 L6.4 0 M8.4 8.4 L10.6 3.4 L12.4 1.4" stroke="#d0d0d0" stroke-width="1.3" fill="none"/><path d="M5.6 0.2 H7.2 V3.2 H5.6 Z" fill="#e0e0e0"/></svg>
<svg style="left:1003.6px;top:164.2px;" width="13" height="12.2" viewBox="0 0 13 12.2" preserveAspectRatio="none"><circle cx="6.5" cy="3.2" r="2.9" fill="#c8c8c8"/><circle cx="3.2" cy="6.8" r="2.9" fill="#c8c8c8"/><circle cx="9.8" cy="6.8" r="2.9" fill="#c8c8c8"/><path d="M5.8 5 H7.2 L7.4 9.6 L9.6 11.8 H3.4 L5.6 9.6 Z" fill="#c8c8c8"/></svg>
<svg style="left:1003.2px;top:196.6px;" width="14" height="8.8" viewBox="0 0 14 8.8" preserveAspectRatio="none"><rect x="0" y="0" width="14" height="1" fill="#d0d0d0"/><rect x="0" y="3" width="14" height="1.6" fill="#d0d0d0"/><rect x="0" y="6.4" width="14" height="2.4" fill="#d0d0d0"/></svg>
<svg style="left:1003px;top:216.6px;" width="14.4" height="9.4" viewBox="0 0 14.4 9.4" preserveAspectRatio="none"><defs><linearGradient id="dg" x1="0" x2="1"><stop offset="0" stop-color="#3e3e3e"/><stop offset="1" stop-color="#e0e0e0"/></linearGradient></defs><rect x="0.5" y="0.5" width="13.4" height="8.4" fill="url(#dg)" stroke="#c4c4c4" stroke-width="0.8"/></svg>
<svg style="left:1003px;top:236.8px;" width="14.2" height="12.8" viewBox="0 0 14.2 12.8" preserveAspectRatio="none"><circle cx="5.6" cy="5.4" r="4.9" fill="#a8a8a8" stroke="#d0d0d0" stroke-width="0.8"/><circle cx="8.4" cy="7.6" r="4.9" fill="#7a7a7a" fill-opacity="0.75" stroke="#d8d8d8" stroke-width="0.9"/></svg>
<svg style="left:1003px;top:267.2px;" width="14.4" height="13" viewBox="0 0 14.4 13" preserveAspectRatio="none"><rect x="3.6" y="0.5" width="10.2" height="9" fill="#505050" stroke="#c4c4c4" stroke-width="0.9"/><rect x="0.5" y="5.6" width="5.4" height="5.2" fill="#5a5a5a" stroke="#c4c4c4" stroke-width="0.8"/><rect x="2.8" y="7.8" width="4.4" height="4.4" fill="#6a6a6a" stroke="#d4d4d4" stroke-width="0.8"/></svg>
<svg style="left:1003px;top:297.8px;" width="14.2" height="12.4" viewBox="0 0 14.2 12.4" preserveAspectRatio="none"><path d="M7.1 0 L14 4 L7.1 8 L0.2 4 Z" fill="#d4d4d4"/><path d="M1.8 6.6 L0.2 7.6 L7.1 11.8 L14 7.6 L12.4 6.6 L7.1 9.8 Z" fill="#adadad"/></svg>
<svg style="left:1002.6px;top:317.4px;" width="14.8" height="14.2" viewBox="0 0 14.8 14.2" preserveAspectRatio="none"><rect x="0.5" y="0.5" width="8.6" height="9" fill="#4b4b4b" stroke="#c8c8c8" stroke-width="0.9"/><rect x="4.6" y="4.6" width="9.6" height="9" fill="#565656" stroke="#c8c8c8" stroke-width="0.9"/></svg>
<svg style="left:984px;top:69px;" width="7.4" height="5" viewBox="0 0 7.4 5" preserveAspectRatio="none"><path d="M0 5 H7.4 L3.7 0 Z" fill="#e2e2e2"/></svg>
<svg style="left:984px;top:526.6px;" width="7.4" height="5" viewBox="0 0 7.4 5" preserveAspectRatio="none"><path d="M0 0 H7.4 L3.7 5 Z" fill="#e2e2e2"/></svg>
<svg style="left:972px;top:536.4px;" width="5" height="7.2" viewBox="0 0 5 7.2" preserveAspectRatio="none"><path d="M0 0 V7.2 L5 3.6 Z" fill="#dcdcdc"/></svg>
<svg style="left:375.8px;top:536.4px;" width="5" height="7.2" viewBox="0 0 5 7.2" preserveAspectRatio="none"><path d="M5 0 V7.2 L0 3.6 Z" fill="#dcdcdc"/></svg>
<div style="left:59px;top:534.6px;width:31.2px;height:11.4px;background:#adadad;border-left:1px solid #333;box-sizing:border-box;"></div>
<span class="t" style="left:61.40px;top:537.21px;font-size:9.2px;line-height:9.2px;color:#000;transform:scaleX(0.7820);">100%</span>
<div style="left:90px;top:534.6px;width:11.2px;height:11.4px;background:#5b5b5b;border:1px solid #383838;box-sizing:border-box;"></div>
<svg style="left:93px;top:538.6px;" width="5.2" height="3.4" viewBox="0 0 5.2 3.4" preserveAspectRatio="none"><path d="M0 0 H5.2 L2.6 3.4 Z" fill="#e4e4e4"/></svg>
<svg style="left:108px;top:537.2px;" width="6" height="5.4" viewBox="0 0 6 5.4" preserveAspectRatio="none"><rect x="0" y="0" width="1" height="5.4" fill="#6a6a6a"/><path d="M5.8 0 V5.4 L1.6 2.7 Z" fill="#6a6a6a"/></svg>
<svg style="left:122px;top:537.2px;" width="4.4" height="5.4" viewBox="0 0 4.4 5.4" preserveAspectRatio="none"><path d="M4.2 0 V5.4 L0 2.7 Z" fill="#6a6a6a"/></svg>
<div style="left:133.6px;top:534.6px;width:31.6px;height:11.4px;background:#adadad;border-left:1px solid #333;box-sizing:border-box;"></div>
<span class="t" style="left:136.60px;top:537.21px;font-size:9.2px;line-height:9.2px;color:#000;transform:scaleX(0.5863);">1</span>
<div style="left:165px;top:534.6px;width:11.2px;height:11.4px;background:#5b5b5b;border:1px solid #383838;box-sizing:border-box;"></div>
<svg style="left:168px;top:538.6px;" width="5.2" height="3.4" viewBox="0 0 5.2 3.4" preserveAspectRatio="none"><path d="M0 0 H5.2 L2.6 3.4 Z" fill="#e4e4e4"/></svg>
<svg style="left:184px;top:537.2px;" width="4.4" height="5.4" viewBox="0 0 4.4 5.4" preserveAspectRatio="none"><path d="M0 0 V5.4 L4.2 2.7 Z" fill="#6a6a6a"/></svg>
<svg style="left:195.4px;top:537.2px;" width="6" height="5.4" viewBox="0 0 6 5.4" preserveAspectRatio="none"><rect x="5" y="0" width="1" height="5.4" fill="#6a6a6a"/><path d="M0 0 V5.4 L4.2 2.7 Z" fill="#6a6a6a"/></svg>
<div style="left:209px;top:534.8px;width:1px;height:11px;background:#414141;"></div>
<span class="t" style="left:268.00px;top:537.86px;font-size:8.2px;line-height:8.2px;color:#d8d8d8;transform:scaleX(0.8893);">Selection</span>
<div style="left:357.6px;top:534.3px;width:14.4px;height:11.5px;background:#505050;border-left:1px solid #3a3a3a;box-sizing:border-box;"></div>
<svg style="left:363.2px;top:536.6px;" width="4.6" height="6.4" viewBox="0 0 4.6 6.4" preserveAspectRatio="none"><path d="M0 0 V6.4 L4.6 3.2 Z" fill="#cfcfcf"/></svg>
<div style="left:184.5px;top:545.8px;width:46px;height:6.2px;overflow:hidden;background:#454545;"><span class="t" style="left:1.2px;top:2.4px;font-size:8.6px;line-height:8.6px;color:#d0d0d0;transform:scaleX(0.86);">Align Stroke:</span></div>
<div style="left:230px;top:545.8px;width:17.5px;height:6.2px;background:#3a3a3a;"></div>
<div style="left:235.2px;top:546.8px;width:1px;height:5.2px;background:#d8d8d8;"></div>
<div style="left:237.4px;top:546.8px;width:1px;height:5.2px;background:#d8d8d8;"></div>
<div style="left:249px;top:546.6px;width:15.6px;height:5.4px;background:#5c5c5c;"></div>
<div style="left:266px;top:546.6px;width:15.8px;height:5.4px;background:#5c5c5c;"></div>
<div style="left:254.6px;top:547.4px;width:1.6px;height:4.6px;background:#777;"></div>
<div style="left:271.4px;top:547.4px;width:3px;height:4.6px;background:#8a8a8a;"></div>
<span class="t" style="left:1004.80px;top:546.47px;font-size:7px;line-height:7px;color:#c8c8c8;transform:scaleX(1.1246);">30/08</span>
<div style="left:822.6px;top:547.6px;width:1px;height:3px;background:#d0d0d0;"></div>
<svg style="left:12.2px;top:555px;" width="12.2" height="12" viewBox="0 0 12.2 12" preserveAspectRatio="none"><path d="M0 1.7 L5.3 0.95 V5.7 H0 Z M6 0.85 L12.2 0 V5.7 H6 Z M0 6.4 H5.3 V11.1 L0 10.35 Z M6 6.4 H12.2 V12 L6 11.2 Z" fill="#fff"/></svg>
<svg style="left:47.6px;top:554.8px;" width="12.6" height="12.6" viewBox="0 0 12.6 12.6" preserveAspectRatio="none"><circle cx="8" cy="4.6" r="3.9" fill="none" stroke="#f0f0f0" stroke-width="1.2"/><path d="M5.2 7.4 L0.6 12" stroke="#f0f0f0" stroke-width="1.3"/></svg>
<svg style="left:83.6px;top:555px;" width="12.6" height="11.6" viewBox="0 0 12.6 11.6" preserveAspectRatio="none"><rect x="1.6" y="2.4" width="6.6" height="6.6" fill="none" stroke="#f0f0f0" stroke-width="1.2"/><path d="M0.4 0.5 H9.2 M0.4 11 H9.2" stroke="#f0f0f0" stroke-width="1"/><rect x="10.6" y="2.2" width="1.6" height="1.6" fill="#f0f0f0"/><rect x="10.8" y="5" width="1.2" height="6.4" fill="#f0f0f0"/></svg>
<svg style="left:119.6px;top:554.4px;" width="16.6" height="13" viewBox="0 0 16.6 13" preserveAspectRatio="none"><path d="M0.4 1.2 Q0.4 0.4 1.2 0.4 H5.6 L7 1.8 H15.4 Q16.2 1.8 16.2 2.6 V12.2 H0.4 Z" fill="#f5c64a"/><rect x="0.4" y="3.2" width="15.8" height="9.2" fill="#fbe08a"/><path d="M3.6 12.6 V8.4 H12.8 V12.6 H10.6 V10.4 H5.8 V12.6 Z" fill="#3a86e6"/></svg>
<svg style="left:156.2px;top:553.8px;" width="17" height="13.6" viewBox="0 0 17 13.6" preserveAspectRatio="none"><path d="M0.4 4.6 L9.4 0.4 L16.4 7.4 L8 12.4 Z" fill="#e0382a"/><path d="M8 12.4 L16.4 7.4 V9.2 L8.2 13.4 L6.6 12 Z" fill="#b9b0a4"/><path d="M0.4 4.6 L8 12.4 L6.6 12.2 L0.6 6 Z" fill="#a8241c"/><path d="M6.4 4 L9.6 3 L10 4.6 L8 5.4 Z" fill="#f2a63a"/></svg>
<svg style="left:193.2px;top:553.6px;" width="18" height="15" viewBox="0 0 18 15" preserveAspectRatio="none"><ellipse cx="9" cy="5.6" rx="8" ry="5" fill="#e8e4e0" stroke="#c98a4a" stroke-width="0.8" transform="rotate(-14 9 5.6)"/><ellipse cx="6.6" cy="7.8" rx="5" ry="2" fill="#a8a4a0" transform="rotate(-14 6.6 7.8)"/><path d="M8 3 L12.6 9.6 M12.4 3.2 L9.4 9.4" stroke="#d8d4d0" stroke-width="0.9"/><circle cx="10" cy="12" r="2" fill="none" stroke="#2f74d6" stroke-width="1.2"/><circle cx="14.4" cy="10.2" r="1.8" fill="none" stroke="#2f74d6" stroke-width="1.2"/></svg>
<svg style="left:232px;top:552.4px;" width="12.8" height="16.8" viewBox="0 0 12.8 16.8" preserveAspectRatio="none"><rect x="0" y="0" width="12.8" height="16.8" rx="6.4" ry="7.6" fill="#2d7be0"/><path d="M3.4 5.4 L9 10.8 L6.3 13.6 V3 L9 5.8 L3.4 11.2" fill="none" stroke="#fff" stroke-width="1.1"/></svg>
<svg style="left:266.8px;top:552.7px;" width="17" height="17" viewBox="0 0 17 17" preserveAspectRatio="none"><circle cx="8.5" cy="8.5" r="8.3" fill="#de4a3a"/><path d="M8.5 8.5 L1.3 4.35 A8.3 8.3 0 0 0 4.35 15.7 Z" fill="#2fa04e"/><path d="M8.5 8.5 L4.35 15.7 A8.3 8.3 0 0 0 15.7 12.65 Z" fill="#2fa04e"/><path d="M8.5 8.5 L8.5 16.8 A8.3 8.3 0 0 0 16.8 8.5 H8.5 Z" fill="#f3c636"/><path d="M8.5 8.5 L16.4 6 A8.3 8.3 0 0 1 10 16.6 Z" fill="#f3c636"/><circle cx="8.5" cy="8.5" r="3.9" fill="#f4f4f4"/><circle cx="8.5" cy="8.5" r="3.1" fill="#4a8af0"/></svg>
<svg style="left:303.4px;top:552.9px;" width="16.8" height="14.4" viewBox="0 0 16.8 14.4" preserveAspectRatio="none"><rect x="0.7" y="0.7" width="15.4" height="13" fill="#2a1a05" stroke="#f29a24" stroke-width="1.3"/></svg>
<svg style="left:339.2px;top:552.4px;" width="18.4" height="17.4" viewBox="0 0 18.4 17.4" preserveAspectRatio="none"><path d="M7.6 3.4 Q14 2 15.8 6 Q16.6 10 12 12.6 Q7 15 5.4 12.6 Q5 11 3.6 11 Q0.4 11 0.6 8.4 Q1.4 4.6 7.6 3.4 Z" fill="#ece8e4" stroke="#b8b4b0" stroke-width="0.5"/><circle cx="5.4" cy="7.2" r="1.3" fill="#e04a3a"/><circle cx="9" cy="5.4" r="1.3" fill="#f0b030"/><circle cx="12.6" cy="6.2" r="1.3" fill="#e8e04a"/><circle cx="8.2" cy="9.4" r="1.4" fill="#222"/><circle cx="12.4" cy="9.8" r="1.3" fill="#4a8ae0"/><path d="M16.6 1.4 L9.8 15.6" stroke="#c8862e" stroke-width="1.5"/><circle cx="16.8" cy="1.4" r="1.3" fill="#d89a3a"/><path d="M11 12.4 L9.6 16.6" stroke="#8ab8f0" stroke-width="2"/></svg>
<div style="left:260.4px;top:574.3px;width:29.600000000000023px;height:1.7px;background:#86b4f2;"></div>
<div style="left:294px;top:574.3px;width:36px;height:1.7px;background:#86b4f2;"></div>
<div style="left:334px;top:574.3px;width:29.399999999999977px;height:1.7px;background:#86b4f2;"></div>
<svg style="left:809.2px;top:554.6px;" width="12" height="11.8" viewBox="0 0 12 11.8" preserveAspectRatio="none"><circle cx="8.2" cy="2.6" r="2" fill="none" stroke="#f0f0f0" stroke-width="1"/><path d="M5 9 Q5.2 5.6 8.2 5.6 Q11.4 5.6 11.6 9" fill="none" stroke="#f0f0f0" stroke-width="1"/><circle cx="3.6" cy="5.4" r="1.8" fill="none" stroke="#f0f0f0" stroke-width="1"/><path d="M0.5 11.6 Q0.7 8.4 3.6 8.4 Q6.6 8.4 6.8 11.6" fill="none" stroke="#f0f0f0" stroke-width="1"/></svg>
<svg style="left:836.6px;top:558px;" width="10.4" height="5.8" viewBox="0 0 10.4 5.8" preserveAspectRatio="none"><path d="M0.5 5.4 L5.2 0.8 L9.9 5.4" fill="none" stroke="#f0f0f0" stroke-width="1.2"/></svg>
<svg style="left:853.8px;top:556px;" width="12.4" height="9.8" viewBox="0 0 12.4 9.8" preserveAspectRatio="none"><path d="M0.5 3.2 H2.8 L5.8 0.5 V9.3 L2.8 6.6 H0.5 Z" fill="none" stroke="#f0f0f0" stroke-width="0.9"/><path d="M7.4 3 Q8.6 4.9 7.4 6.8 M9 1.8 Q11 4.9 9 8 M10.6 0.8 Q13.2 4.9 10.6 9" fill="none" stroke="#e0e0e0" stroke-width="0.8"/></svg>
<svg style="left:871.8px;top:556.8px;" width="12" height="8.2" viewBox="0 0 12 8.2" preserveAspectRatio="none"><rect x="3" y="1.6" width="8" height="5.4" fill="none" stroke="#f0f0f0" stroke-width="0.9"/><rect x="11" y="3.2" width="1" height="2.2" fill="#f0f0f0"/><rect x="3.6" y="2.4" width="3.6" height="3.8" fill="#f0f0f0"/><path d="M0.4 0.4 V3 M2.2 0.4 V3 M0 2.6 H2.8 V4.4 H0 Z M1.3 4.4 V6.4 H3" stroke="#f0f0f0" stroke-width="0.8" fill="none"/></svg>
<svg style="left:891.6px;top:556.8px;" width="10" height="9.6" viewBox="0 0 10 9.6" preserveAspectRatio="none"><path d="M0.6 9.2 A8.6 8.6 0 0 1 9.2 0.6" fill="none" stroke="#bdbdbd" stroke-width="1.1"/><path d="M3.4 9.2 A5.8 5.8 0 0 1 9.2 3.4" fill="none" stroke="#e8e8e8" stroke-width="1.1"/><path d="M6 9.2 A3.2 3.2 0 0 1 9.2 6" fill="none" stroke="#f4f4f4" stroke-width="1.1"/><circle cx="8.6" cy="8.8" r="0.9" fill="#fff"/></svg>
<span class="t" style="left:910.50px;top:556.58px;font-size:9px;line-height:9px;color:#f2f2f2;transform:scaleX(0.9871);">IND</span>
<div style="left:940px;top:552px;width:40px;height:6px;overflow:hidden;background:transparent;"><span class="t" style="left:8px;top:-3.0px;font-size:10px;line-height:10px;color:#f2f2f2;transform:scaleX(0.84);">10:22</span></div>
<span class="t" style="left:936.30px;top:562.53px;font-size:10px;line-height:10px;color:#fafafa;transform:scaleX(0.8691);">24/01/2019</span>
<svg style="left:992.8px;top:554.4px;" width="20" height="19.4" viewBox="0 0 20 19.4" preserveAspectRatio="none"><path d="M0.6 0.6 H12.6 V9.6 H5.6 L3.4 12 V9.6 H0.6 Z" fill="#f4f4f4" stroke="#f4f4f4" stroke-width="1"/><path d="M2.4 3.5 H10.8 M2.4 6.5 H10.8" stroke="#2a2a2a" stroke-width="0.9"/><circle cx="12.4" cy="12" r="6.8" fill="#3a3a3a" stroke="#8a8a8a" stroke-width="0.8"/></svg>
<span class="t" style="left:1000.20px;top:561.84px;font-size:9.4px;line-height:9.4px;color:#f6f6f6;transform:scaleX(0.9946);">20</span>
<span class="t" style="left:306.60px;top:555.81px;font-size:9.2px;line-height:9.2px;color:#f29a24;font-weight:bold;transform:scaleX(1.1087);">Ai</span>
<div style="left:1020.4px;top:552px;width:1px;height:24px;background:#4a4a4a;"></div>
</div></body></html>
